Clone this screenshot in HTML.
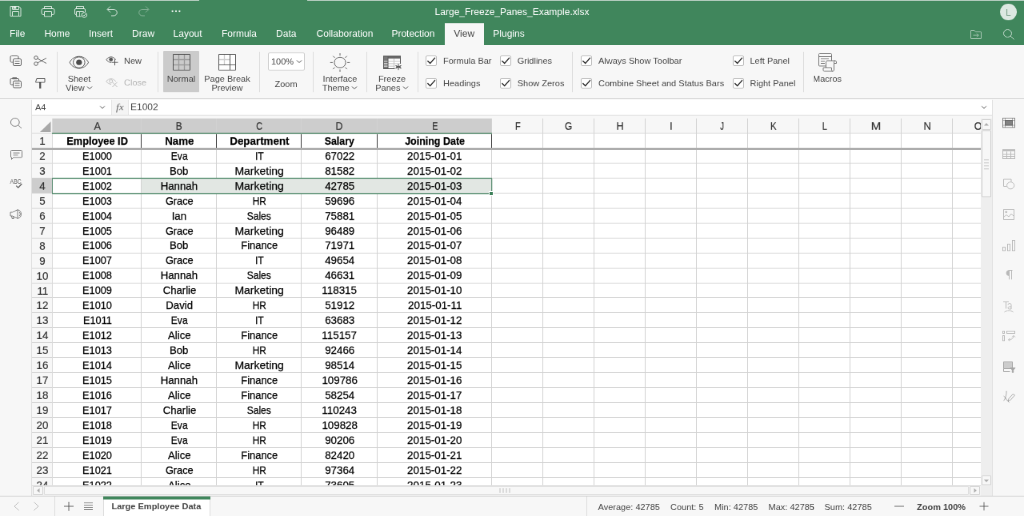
<!DOCTYPE html>
<html><head><meta charset="utf-8"><title>Large_Freeze_Panes_Example.xlsx</title>
<style>
html,body{margin:0;padding:0;}
body{width:1024px;height:516px;overflow:hidden;background:#f7f7f7;font-family:"Liberation Sans",sans-serif;}
#stage{position:absolute;left:0;top:0;width:1280px;height:688px;transform-origin:0 0;transform:scale(.8,.75);will-change:transform;background:#f7f7f7;overflow:hidden;font-size:11px;color:#3d3d3d;}
#stage div,#stage span,#stage svg{position:absolute;box-sizing:border-box;}
.t{white-space:nowrap;line-height:14px;}
.c{text-align:center;}
#hdr{left:0;top:0;width:1280px;height:60px;background:#40865c;}
.tab{top:28px;height:32px;line-height:33px;font-size:12px;color:#fff;white-space:nowrap;}
.sep{width:1px;background:#dcdcdc;top:69px;height:54px;}
.cb{width:14px;height:14px;background:#fff;border:1px solid #b9b9b9;border-radius:2px;}
.lbl{font-size:11px;line-height:14px;white-space:nowrap;color:#444;}
#grid{left:40px;top:158px;width:1186px;height:489px;background:#fff;overflow:hidden;}
.hl{left:0;height:1px;background:#d0d0d0;}
.vl{top:0;width:1px;background:#d2d2d2;}
.cell{height:20px;line-height:20px;font-size:14.2px;text-align:center;white-space:nowrap;color:#000;overflow:hidden;-webkit-text-stroke:0.25px #000;}
.ch{top:0;height:20px;line-height:20.2px;font-size:14.2px;text-align:center;color:#333;-webkit-text-stroke:0.2px #333;}
.rh{left:0;width:26px;height:20px;line-height:21px;font-size:14.2px;text-align:center;color:#333;-webkit-text-stroke:0.2px #333;}
.sbt{top:667.5px;font-size:11px;line-height:16px;white-space:nowrap;color:#444;}
</style></head><body>
<div id="stage">

<div id="hdr">
<div style="left:0;top:0;width:249px;height:1.3333px;background:#c7d8cf"></div>
<div style="left:384px;top:0;width:896px;height:1.3333px;background:#c7d8cf"></div>
<svg style="left:10px;top:5px;width:20px;height:20px;" viewBox="0 0 20 20"><g stroke="#fff" fill="none" stroke-width="1" opacity=".82"><path d="M3 3.500h10.500l2.500 2.500v10.500h-13z"/><path d="M5.500 3.500v4h8v-4"/><path d="M5.500 16.500v-6h8v6"/><path d="M6.500 4h3.800v2.700h-3.800z" fill="#fff" stroke="none"/></g></svg>
<svg style="left:50px;top:5px;width:20px;height:20px;" viewBox="0 0 20 20"><g stroke="#fff" fill="none" stroke-width="1" opacity=".82"><path d="M5.500 6.500v-3h9v3"/><path d="M5.500 14.500h-1.500a2 2 0 0 1-2-2v-4a2 2 0 0 1 2-2h12a2 2 0 0 1 2 2v4a2 2 0 0 1-2 2h-1.500"/><path d="M5.500 10.500h9v6.500h-9z"/></g></svg>
<svg style="left:90px;top:5px;width:20px;height:20px;" viewBox="0 0 20 20"><g stroke="#fff" fill="none" stroke-width="1" opacity=".82"><path d="M5.500 6.500v-3h9v3"/><path d="M5.500 14.500h-0.500a1.500 1.500 0 0 1-1.500-1.500v-5a1.500 1.500 0 0 1 1.500-1.500h10a1.500 1.500 0 0 1 1.500 1.500v3"/><path d="M11.500 17h-6v-6.500h9v1"/><path d="M9.500 10.500v6.500" opacity=".8"/><circle cx="15.300" cy="15" r="3.300"/><path d="M13.800 15.100l1.100 1.100 2-2.200"/></g></svg>
<svg style="left:130px;top:5px;width:20px;height:20px;" viewBox="0 0 20 20"><g stroke="#fff" fill="none" stroke-width="1" opacity=".82"><path d="M8 3.500l-4 4 4 4"/><path d="M4.500 7.500h7.500a4.200 4.200 0 0 1 0 8.500h-3"/></g></svg>
<svg style="left:170px;top:5px;width:20px;height:20px;" viewBox="0 0 20 20"><g stroke="#fff" fill="none" stroke-width="1" opacity=".38"><path d="M12 3.500l4 4-4 4"/><path d="M15.500 7.500h-7.500a4.200 4.200 0 0 0 0 8.500h3"/></g></svg>
<svg style="left:210px;top:5px;width:20px;height:20px;" viewBox="0 0 20 20"><g fill="#fff" opacity=".9"><circle cx="5.600" cy="10" r="1.150"/><circle cx="10" cy="10" r="1.150"/><circle cx="14.400" cy="10" r="1.150"/></g></svg>
<svg style="left:1210px;top:35.5px;width:20px;height:20px;" viewBox="0 0 20 20"><g stroke="#fff" fill="none" stroke-width="1" opacity=".55"><path d="M4 15.500a0.500 0.500 0 0 1-0.500-0.500v-10a0.500 0.500 0 0 1 0.500-0.500h4l1.500 2h6.500a0.500 0.500 0 0 1 0.500 0.500v8a0.500 0.500 0 0 1-0.500 0.500z"/><path d="M6.500 11h6.500"/><path d="M11 8.700l2.300 2.300-2.300 2.300" /></g></svg>
<svg style="left:1250.5px;top:36px;width:20px;height:20px;" viewBox="0 0 20 20"><g stroke="#fff" fill="none" stroke-width="1" opacity=".7"><circle cx="8.500" cy="8.500" r="5"/><path d="M12.200 12.200l4.300 4.300"/></g></svg>
<div class="t c" style="left:440px;width:400px;top:8px;font-size:12px;line-height:16px;color:#fff;">Large_Freeze_Panes_Example.xlsx</div>
<div style="left:1250px;top:5px;width:20.5px;height:22px;border-radius:50%;background:#dce8e1;"></div>
<div class="t c" style="left:1250px;top:8.5px;width:20.5px;font-size:12px;line-height:16px;color:#7fa38d;">L</div>
<div style="left:555.5px;top:31px;width:49.500px;height:29px;background:#f7f7f7;"></div>
<div class="tab" style="left:12.1px;top:28.8px;color:#fff;">File</div>
<div class="tab" style="left:55.4px;top:28.8px;color:#fff;">Home</div>
<div class="tab" style="left:111px;top:28.8px;color:#fff;">Insert</div>
<div class="tab" style="left:165.1px;top:28.8px;color:#fff;">Draw</div>
<div class="tab" style="left:216.6px;top:28.8px;color:#fff;">Layout</div>
<div class="tab" style="left:276.9px;top:28.8px;color:#fff;">Formula</div>
<div class="tab" style="left:345.1px;top:28.8px;color:#fff;">Data</div>
<div class="tab" style="left:395.6px;top:28.8px;color:#fff;">Collaboration</div>
<div class="tab" style="left:489.4px;top:28.8px;color:#fff;">Protection</div>
<div class="tab" style="left:567.3px;top:28.8px;color:#444;">View</div>
<div class="tab" style="left:616.3px;top:28.8px;color:#fff;">Plugins</div>
</div>
<div id="tb" style="left:0;top:60px;width:1280px;height:72px;background:#f7f7f7;border-bottom:1px solid #d6d6d6;"></div>
<svg style="left:10px;top:71px;width:20px;height:20px;" viewBox="0 0 20 20"><g stroke="#444" fill="none" stroke-width="1" opacity=".85"><rect x="3" y="3.500" width="10" height="8.500" rx="1.500"/><rect x="6.500" y="7.500" width="10" height="9" rx="1.500" fill="#f7f7f7"/><path d="M8.500 10.500h6M8.500 13.500h6"/></g></svg>
<svg style="left:40px;top:71px;width:20px;height:20px;" viewBox="0 0 20 20"><g stroke="#444" fill="none" stroke-width="1" opacity=".85"><circle cx="5" cy="6" r="2.300"/><circle cx="5" cy="14" r="2.300"/><path d="M7 7.200l11 6.300M7 12.800l11-6.300"/></g></svg>
<svg style="left:10px;top:100px;width:20px;height:20px;" viewBox="0 0 20 20"><g stroke="#444" fill="none" stroke-width="1" opacity=".85"><path d="M6.500 13h-2a1.500 1.500 0 0 1-1.500-1.500v-5.500a1.500 1.500 0 0 1 1.500-1.500h7.500a1.500 1.500 0 0 1 1.500 1.500v1.500"/><path d="M5.500 4.300h5.500" stroke-width="2.200"/><rect x="6.500" y="8" width="10" height="9" rx="1.500" fill="#f7f7f7"/><path d="M8.500 11h6M8.500 14h6"/></g></svg>
<svg style="left:40px;top:100px;width:20px;height:20px;" viewBox="0 0 20 20"><g stroke="#444" fill="none" stroke-width="1" opacity=".9"><path d="M6 4.500h10v5h-11.500z"/><path d="M10.200 10v8" stroke-width="2.300"/></g></svg>
<div class="sep" style="left:70.5px;"></div>
<svg style="left:84px;top:68px;width:30px;height:30px;" viewBox="0 0 30 30"><g stroke="#444" fill="none" stroke-width="1" opacity=".9"><path d="M3 15.200c5.300-10.600 18.300-10.600 23.600 0c-5.300 10.600-18.300 10.600-23.600 0z"/><circle cx="14.800" cy="15.200" r="7.300"/><circle cx="14.800" cy="15.200" r="3.600" fill="#3a3a3a" stroke="none"/></g></svg>
<div class="lbl c" style="left:39px;top:98px;width:120px;">Sheet</div>
<div class="lbl c" style="left:39px;top:110px;width:120px;">View<svg style="position:relative;display:inline-block;width:8px;height:6px;margin-left:2.300px;top:-1px" viewBox="0 0 8 6"><path d="M1 1.500l3 3 3-3" stroke="#444" fill="none"/></svg></div>
<svg style="left:130px;top:71px;width:20px;height:20px;" viewBox="0 0 20 20"><g stroke="#444" fill="none" stroke-width="1" opacity=".9"><path d="M3 8.600c3-5 8.500-5 11.500 0"/><path d="M3 8.600c1.500 2.500 3.800 3.700 6 3.700"/><circle cx="8.700" cy="8.300" r="2" fill="#444"/><path d="M13.500 8.200v8M9.500 12.200h8"/></g></svg>
<div class="lbl" style="left:155px;top:74px;">New</div>
<svg style="left:130px;top:100px;width:20px;height:20px;" viewBox="0 0 20 20"><g stroke="#444" fill="none" stroke-width="1" opacity=".33"><path d="M3 8.600c3-5 8.500-5 11.500 0"/><path d="M3 8.600c1.500 2.500 3.800 3.700 6 3.700"/><circle cx="8.700" cy="8.300" r="2"/><path d="M10.500 9.500l6 6.500M16.500 9.500l-6 6.500"/></g></svg>
<div class="lbl" style="left:155px;top:103px;opacity:.38">Close</div>
<div class="sep" style="left:196.5px;"></div>
<div style="left:203.500px;top:68px;width:45.300px;height:55px;background:#cbcbcb;border-radius:1px;"></div>
<svg style="left:212px;top:68.4px;width:30px;height:30px;" viewBox="0 0 30 30"><g stroke="#444" fill="none" stroke-width="1" opacity=".9"><path d="M4.500 4.500h21v21h-21z"/><path d="M11.500 4.500v21M18.500 4.500v21M4.500 11.500h21M4.500 18.500h21" opacity=".42" stroke-width="1.300"/></g></svg>
<div class="lbl c" style="left:166.5px;top:98px;width:120px;">Normal</div>
<svg style="left:269.3px;top:68.4px;width:30px;height:30px;" viewBox="0 0 30 30"><g stroke="#444" fill="none" stroke-width="1" opacity=".9"><path d="M4.500 4.500h21v21h-21z" fill="#fff"/><path d="M18.500 4.500v21M4.500 18.500h21"/><path d="M11.500 4.500v14M4.500 11.500h14" opacity=".3" stroke-width="1.300"/></g></svg>
<div class="lbl c" style="left:224px;top:98px;width:120px;">Page Break</div>
<div class="lbl c" style="left:224px;top:110px;width:120px;">Preview</div>
<div class="sep" style="left:323.5px;"></div>
<div style="left:334.500px;top:70px;width:46px;height:24px;background:#fff;border:1px solid #cbcbcb;border-radius:2px;"></div>
<div class="lbl" style="left:339px;top:75px;">100%</div>
<svg style="left:369.5px;top:79px;width:8px;height:6px;" viewBox="0 0 8 6"><path d="M1 1.500l3 3 3-3" stroke="#444" fill="none"/></svg>
<div class="lbl c" style="left:297.5px;top:105px;width:120px;">Zoom</div>
<div class="sep" style="left:390.5px;"></div>
<svg style="left:410px;top:68px;width:30px;height:30px;" viewBox="0 0 30 30"><g stroke="#444" fill="none" stroke-width="1" opacity=".85"><circle cx="15" cy="15.400" r="7.100"/><path d="M15 3v3.200M15 24.600v3.200M2.700 15.400h3.200M24.100 15.400h3.200M6.300 6.700l2.300 2.300M21.400 21.800l2.300 2.300M6.300 24.100l2.300-2.300M21.400 9l2.300-2.300"/></g></svg>
<div class="lbl c" style="left:365px;top:98px;width:120px;">Interface</div>
<div class="lbl c" style="left:365px;top:110px;width:120px;">Theme<svg style="position:relative;display:inline-block;width:8px;height:6px;margin-left:2.300px;top:-1px" viewBox="0 0 8 6"><path d="M1 1.500l3 3 3-3" stroke="#444" fill="none"/></svg></div>
<div class="sep" style="left:458px;"></div>
<svg style="left:475px;top:68px;width:30px;height:30px;" viewBox="0 0 30 30"><g stroke="#444" fill="none" stroke-width="1" opacity=".88"><rect x="4.500" y="7" width="21" height="16.500" fill="#fff"/><rect x="4.500" y="7" width="21" height="3.200" fill="#555" stroke="none"/><rect x="4.500" y="7" width="5.500" height="16.500" fill="#666" stroke="none"/><path d="M4.500 13.500h21M4.500 16.900h21M4.500 20.200h21" stroke="#bbb"/><path d="M4.500 13.500h5.500M4.500 16.900h5.500M4.500 20.200h5.500" stroke="#ddd"/><path d="M17.500 10v13.500" stroke="#bbb"/><path d="M10 7v16.500"/><rect x="4.500" y="7" width="21" height="16.500"/><rect x="18.500" y="17" width="9" height="9" fill="#f7f7f7" stroke="none"/><path d="M23 17.200v8M19.500 19.200l7 4M26.500 19.200l-7 4M20 21.200h6" stroke-width="1.100"/></g></svg>
<div class="lbl c" style="left:430px;top:98px;width:120px;">Freeze</div>
<div class="lbl c" style="left:430px;top:110px;width:120px;">Panes<svg style="position:relative;display:inline-block;width:8px;height:6px;margin-left:2.300px;top:-1px" viewBox="0 0 8 6"><path d="M1 1.500l3 3 3-3" stroke="#444" fill="none"/></svg></div>
<div class="sep" style="left:521.5px;"></div>
<div class="cb" style="left:532px;top:74px;"><svg style="left:0;top:0;width:12px;height:12px" viewBox="0 0 12 12"><path d="M1.400 6l3.300 3.500 6.200-7.600" stroke="#222" stroke-width="1.400" fill="none"/></svg></div>
<div class="lbl" style="left:554px;top:74px;">Formula Bar</div>
<div class="cb" style="left:532px;top:103.5px;"><svg style="left:0;top:0;width:12px;height:12px" viewBox="0 0 12 12"><path d="M1.400 6l3.300 3.500 6.200-7.600" stroke="#222" stroke-width="1.400" fill="none"/></svg></div>
<div class="lbl" style="left:554px;top:103.5px;">Headings</div>
<div class="cb" style="left:624.7px;top:74px;"><svg style="left:0;top:0;width:12px;height:12px" viewBox="0 0 12 12"><path d="M1.400 6l3.300 3.500 6.200-7.600" stroke="#222" stroke-width="1.400" fill="none"/></svg></div>
<div class="lbl" style="left:646.7px;top:74px;">Gridlines</div>
<div class="cb" style="left:624.7px;top:103.5px;"><svg style="left:0;top:0;width:12px;height:12px" viewBox="0 0 12 12"><path d="M1.400 6l3.300 3.500 6.200-7.600" stroke="#222" stroke-width="1.400" fill="none"/></svg></div>
<div class="lbl" style="left:646.7px;top:103.5px;">Show Zeros</div>
<div class="sep" style="left:715px;"></div>
<div class="cb" style="left:726px;top:74px;"><svg style="left:0;top:0;width:12px;height:12px" viewBox="0 0 12 12"><path d="M1.400 6l3.300 3.500 6.200-7.600" stroke="#222" stroke-width="1.400" fill="none"/></svg></div>
<div class="lbl" style="left:748px;top:74px;">Always Show Toolbar</div>
<div class="cb" style="left:726px;top:103.5px;"><svg style="left:0;top:0;width:12px;height:12px" viewBox="0 0 12 12"><path d="M1.400 6l3.300 3.500 6.200-7.600" stroke="#222" stroke-width="1.400" fill="none"/></svg></div>
<div class="lbl" style="left:748px;top:103.5px;">Combine Sheet and Status Bars</div>
<div class="cb" style="left:915.5px;top:74px;"><svg style="left:0;top:0;width:12px;height:12px" viewBox="0 0 12 12"><path d="M1.400 6l3.300 3.500 6.200-7.600" stroke="#222" stroke-width="1.400" fill="none"/></svg></div>
<div class="lbl" style="left:937.5px;top:74px;">Left Panel</div>
<div class="cb" style="left:915.5px;top:103.5px;"><svg style="left:0;top:0;width:12px;height:12px" viewBox="0 0 12 12"><path d="M1.400 6l3.300 3.500 6.200-7.600" stroke="#222" stroke-width="1.400" fill="none"/></svg></div>
<div class="lbl" style="left:937.5px;top:103.5px;">Right Panel</div>
<div class="sep" style="left:1004px;"></div>
<svg style="left:1019px;top:68px;width:30px;height:30px;" viewBox="0 0 30 30"><g stroke="#444" fill="none" stroke-width="1" opacity=".72"><rect x="4.500" y="3.500" width="16" height="16.500" rx="1"/><path d="M4.500 7.500h16"/><path d="M7 10.500h10M7 13.500h5M7 16.500h5"/><path d="M13.500 22.500v-8a1.500 1.500 0 0 1 1.500-1.500h10a1.500 1.500 0 0 1 1.500 1.500v2h-3v9a1.500 1.500 0 0 1-1.500 1.500h-10.500a1.500 1.500 0 0 1-1.500-1.500v-3z" fill="#f7f7f7"/><path d="M13.500 22.500h7v3a1.500 1.500 0 0 0 1.500 1.500"/><path d="M23.500 16.500v-2a1.500 1.500 0 0 1 1.500-1.500" /></g></svg>
<div class="lbl c" style="left:974px;top:98px;width:120px;">Macros</div>
<div style="left:0;top:132px;width:1280px;height:26px;background:#f7f7f7;"></div>
<div style="left:40px;top:133px;width:1200px;height:21px;background:#fff;border-bottom:1px solid #d9d9d9;"></div>
<div class="lbl" style="left:44px;top:136px;">A4</div>
<svg style="left:124px;top:140px;width:8px;height:6px;" viewBox="0 0 8 6"><path d="M1 1.500l3 3 3-3" stroke="#555" fill="none"/></svg>
<div style="left:139px;top:133px;width:22px;height:20px;background:#f4f4f4;"></div>
<div style="left:139px;top:133px;width:1px;height:20px;background:#e3e3e3;"></div>
<div style="left:160px;top:133px;width:1px;height:20px;background:#e3e3e3;"></div>
<div class="t" style="left:145px;top:133.500px;font-family:'Liberation Serif',serif;font-style:italic;font-size:13.5px;line-height:18px;color:#666;">fx</div>
<div class="lbl" style="left:163px;top:135.500px;font-size:12px;">E1002</div>
<svg style="left:1226px;top:140px;width:8px;height:6px;" viewBox="0 0 8 6"><path d="M1 1.500l3 3 3-3" stroke="#555" fill="none"/></svg>
<div style="left:0;top:133px;width:40px;height:529px;background:#f7f7f7;border-right:1px solid #dedede;"></div>
<svg style="left:10px;top:155px;width:20px;height:20px;" viewBox="0 0 20 20"><g stroke="#444" fill="none" stroke-width="1" opacity=".7"><circle cx="8.800" cy="8" r="5.400"/><path d="M12.700 11.900l4.300 4.300"/></g></svg>
<svg style="left:10px;top:195.5px;width:20px;height:20px;" viewBox="0 0 20 20"><g stroke="#444" fill="none" stroke-width="1" opacity=".7"><path d="M4.500 4.500h12a1 1 0 0 1 1 1v7.500a1 1 0 0 1-1 1h-9.500l-2.500 2.500v-2.500h0a1 1 0 0 1-1-1v-7.500a1 1 0 0 1 1-1z"/><path d="M6.500 8h8M6.500 10.800h6"/></g></svg>
<svg style="left:10px;top:234px;width:20px;height:20px;" viewBox="0 0 20 20"><text x="2.600" y="11.200" font-family="Liberation Sans, sans-serif" font-size="9.400" textLength="14" lengthAdjust="spacingAndGlyphs" fill="#555">ABC</text></svg>
<svg style="left:10px;top:234px;width:20px;height:20px;" viewBox="0 0 20 20"><g stroke="#444" fill="none" stroke-width="1" opacity=".85"><path d="M10.300 13.600l2.400 2.700 4.600-5.300" stroke-width="1.300"/></g></svg>
<svg style="left:10px;top:275px;width:20px;height:20px;" viewBox="0 0 20 20"><g stroke="#444" fill="none" stroke-width="1" opacity=".7"><path d="M3 8h2.500l6.500-3.300v11.600l-6.500-3.300h-2.500z"/><path d="M4.500 13l0.700 3.500h2l-0.700-3.500"/><path d="M12 4.700a6 6 0 0 1 0 11.600M14 8a3 3 0 0 1 0 5"/></g></svg>
<div style="left:1240px;top:133px;width:40px;height:529px;background:#f7f7f7;border-left:1px solid #e0e0e0;"></div>
<svg style="left:1250.5px;top:154px;width:20px;height:20px;" viewBox="0 0 20 20"><g stroke="#444" fill="none" stroke-width="1" opacity="0.8"><rect x="2.500" y="3.500" width="15" height="12.500" opacity=".8"/><rect x="5.500" y="6.500" width="9" height="6.500" fill="#666"/><path d="M2.500 6.500h15M2.500 13h15M5.500 3.500v12.500M14.500 3.500v12.500" opacity=".5"/></g></svg>
<svg style="left:1250.5px;top:195px;width:20px;height:20px;" viewBox="0 0 20 20"><g stroke="#444" fill="none" stroke-width="1" opacity="0.34"><rect x="2.500" y="4.500" width="15" height="12"/><path d="M2.500 5.500h15" stroke-width="2"/><path d="M2.500 10.500h15M2.500 13.500h15M7.500 7v9.500M12.500 7v9.500"/></g></svg>
<svg style="left:1250.5px;top:235.5px;width:20px;height:20px;" viewBox="0 0 20 20"><g stroke="#444" fill="none" stroke-width="1" opacity="0.34"><path d="M7.500 12.500h-4v-9.500h9.500v3.500"/><circle cx="12.200" cy="11.300" r="4.600"/></g></svg>
<svg style="left:1250.5px;top:276px;width:20px;height:20px;" viewBox="0 0 20 20"><g stroke="#444" fill="none" stroke-width="1" opacity="0.34"><rect x="3.500" y="3.500" width="13" height="13"/><path d="M3.500 13.500l3.500-3 3 2.500 3-4 3.500 3.500"/><circle cx="6.700" cy="6.700" r="1" fill="#444"/></g></svg>
<svg style="left:1250.5px;top:317.5px;width:20px;height:20px;" viewBox="0 0 20 20"><g stroke="#444" fill="none" stroke-width="1" opacity="0.34"><rect x="2.500" y="11.500" width="3" height="5"/><rect x="8.500" y="7.500" width="3" height="9"/><rect x="14.500" y="2.500" width="3" height="14"/></g></svg>
<svg style="left:1250.5px;top:356px;width:20px;height:20px;" viewBox="0 0 20 20"><g stroke="#444" fill="none" stroke-width="1" opacity="0.34"><path d="M10.500 16.500v-12h4M13.500 4.500v12"/><path d="M10.500 4.500a3.500 3.500 0 0 0 0 7z" fill="#444"/></g></svg>
<svg style="left:1250.5px;top:398px;width:20px;height:20px;" viewBox="0 0 20 20"><g stroke="#444" fill="none" stroke-width="1" opacity="0.34"><path d="M3 4.500h7M6.500 4.500v9M13 14v-5.500a2 2 0 0 0-4 0M13 11h-2.500a1.500 1.500 0 0 0 0 3h2.500"/><path d="M4.500 18c3-2.200 8-2.200 11 0"/></g></svg>
<svg style="left:1250.5px;top:438px;width:20px;height:20px;" viewBox="0 0 20 20"><g stroke="#444" fill="none" stroke-width="1" opacity="0.34"><rect x="2.500" y="3.500" width="2" height="3"/><rect x="2.500" y="9.500" width="2" height="7"/><rect x="7.500" y="3.500" width="10" height="3"/><path d="M9.500 15c4 0 6.500-2 6.500-5.500M11.500 13l-2 2 2 2M14 11.500l2-2 2 2"/></g></svg>
<svg style="left:1250.5px;top:478.5px;width:20px;height:20px;" viewBox="0 0 20 20"><g stroke="#444" fill="none" stroke-width="1" opacity="0.45"><path d="M3.500 3.500h11v9h-11z" fill="#999"/><path d="M3.500 12.500v4h8"/><path d="M12 11.500h6l-2.300 2.800v3.200h-1.400v-3.200z" fill="#444"/></g></svg>
<svg style="left:1250.5px;top:518.5px;width:20px;height:20px;" viewBox="0 0 20 20"><g stroke="#444" fill="none" stroke-width="1" opacity="0.42"><path d="M3.500 15.500c2-2 4-9 3.500-13.500M3.500 9c2.500 1 4 7 7 8.500M9 16l1-3.500 5.500-6.500 2 2-5.500 6.500z"/></g></svg>
<div id="grid">
<div style="left:0;top:0;width:1186px;height:20px;background:#f7f7f7;"></div>
<div style="left:0;top:0;width:26px;height:489px;background:#f7f7f7;"></div>
<div style="left:26px;top:0;width:549px;height:20px;background:#cdcdcd;"></div>
<div style="left:0;top:79.85px;width:26px;height:20px;background:#cdcdcd;"></div>
<div class="hl" style="top:19px;width:1186px;"></div>
<div class="hl" style="top:38.95px;width:1186px;"></div>
<div class="hl" style="top:58.9px;width:1186px;"></div>
<div class="hl" style="top:78.85px;width:1186px;"></div>
<div class="hl" style="top:98.8px;width:1186px;"></div>
<div class="hl" style="top:118.75px;width:1186px;"></div>
<div class="hl" style="top:138.7px;width:1186px;"></div>
<div class="hl" style="top:158.65px;width:1186px;"></div>
<div class="hl" style="top:178.6px;width:1186px;"></div>
<div class="hl" style="top:198.55px;width:1186px;"></div>
<div class="hl" style="top:218.5px;width:1186px;"></div>
<div class="hl" style="top:238.45px;width:1186px;"></div>
<div class="hl" style="top:258.4px;width:1186px;"></div>
<div class="hl" style="top:278.35px;width:1186px;"></div>
<div class="hl" style="top:298.3px;width:1186px;"></div>
<div class="hl" style="top:318.25px;width:1186px;"></div>
<div class="hl" style="top:338.2px;width:1186px;"></div>
<div class="hl" style="top:358.15px;width:1186px;"></div>
<div class="hl" style="top:378.1px;width:1186px;"></div>
<div class="hl" style="top:398.05px;width:1186px;"></div>
<div class="hl" style="top:418px;width:1186px;"></div>
<div class="hl" style="top:437.95px;width:1186px;"></div>
<div class="hl" style="top:457.9px;width:1186px;"></div>
<div class="hl" style="top:477.85px;width:1186px;"></div>
<div class="hl" style="top:497.8px;width:1186px;"></div>
<div class="hl" style="top:517.75px;width:1186px;"></div>
<div class="vl" style="left:25px;height:489px;background:#dadada"></div>
<div class="vl" style="left:136px;height:489px;"></div>
<div class="vl" style="left:230px;height:489px;"></div>
<div class="vl" style="left:336px;height:489px;"></div>
<div class="vl" style="left:431px;height:489px;"></div>
<div class="vl" style="left:574px;height:489px;"></div>
<div class="vl" style="left:638px;height:489px;"></div>
<div class="vl" style="left:702px;height:489px;"></div>
<div class="vl" style="left:766px;height:489px;"></div>
<div class="vl" style="left:830px;height:489px;"></div>
<div class="vl" style="left:894px;height:489px;"></div>
<div class="vl" style="left:958px;height:489px;"></div>
<div class="vl" style="left:1022px;height:489px;"></div>
<div class="vl" style="left:1086px;height:489px;"></div>
<div class="vl" style="left:1150px;height:489px;"></div>
<div class="vl" style="left:1214px;height:489px;"></div>
<div class="vl" style="left:1278px;height:489px;"></div>
<div class="hl" style="top:19px;width:1186px;background:#d5d5d5"></div>
<div class="ch" style="left:26px;width:111px;"><span style="position:relative;display:inline-block;transform:scaleX(0.896);">A</span></div>
<div class="ch" style="left:137px;width:94px;"><span style="position:relative;display:inline-block;transform:scaleX(0.842);">B</span></div>
<div class="ch" style="left:231px;width:106px;"><span style="position:relative;display:inline-block;transform:scaleX(0.763);">C</span></div>
<div class="ch" style="left:337px;width:95px;"><span style="position:relative;display:inline-block;transform:scaleX(0.880);">D</span></div>
<div class="ch" style="left:432px;width:143px;"><span style="position:relative;display:inline-block;transform:scaleX(0.756);">E</span></div>
<div class="ch" style="left:575px;width:64px;"><span style="position:relative;display:inline-block;transform:scaleX(0.777);">F</span></div>
<div class="ch" style="left:639px;width:64px;"><span style="position:relative;display:inline-block;transform:scaleX(0.838);">G</span></div>
<div class="ch" style="left:703px;width:64px;"><span style="position:relative;display:inline-block;transform:scaleX(0.891);">H</span></div>
<div class="ch" style="left:767px;width:64px;"><span style="position:relative;display:inline-block;transform:scaleX(0.937);">I</span></div>
<div class="ch" style="left:831px;width:64px;"><span style="position:relative;display:inline-block;transform:scaleX(0.659);">J</span></div>
<div class="ch" style="left:895px;width:64px;"><span style="position:relative;display:inline-block;transform:scaleX(0.805);">K</span></div>
<div class="ch" style="left:959px;width:64px;"><span style="position:relative;display:inline-block;transform:scaleX(0.781);">L</span></div>
<div class="ch" style="left:1023px;width:64px;"><span style="position:relative;display:inline-block;transform:scaleX(1.060);">M</span></div>
<div class="ch" style="left:1087px;width:64px;"><span style="position:relative;display:inline-block;transform:scaleX(0.923);">N</span></div>
<div class="ch" style="left:1151px;width:64px;"><span style="position:relative;display:inline-block;transform:scaleX(0.879);">O</span></div>
<div class="ch" style="left:1215px;width:64px;"><span style="position:relative;display:inline-block;transform:scaleX(0.800);">P</span></div>
<div class="rh" style="top:20px;"><span style="position:relative;display:inline-block;transform:scaleX(0.941);">1</span></div>
<div class="rh" style="top:39.95px;"><span style="position:relative;display:inline-block;transform:scaleX(0.941);">2</span></div>
<div class="rh" style="top:59.9px;"><span style="position:relative;display:inline-block;transform:scaleX(0.941);">3</span></div>
<div class="rh" style="top:79.85px;"><span style="position:relative;display:inline-block;transform:scaleX(0.941);">4</span></div>
<div class="rh" style="top:99.8px;"><span style="position:relative;display:inline-block;transform:scaleX(0.941);">5</span></div>
<div class="rh" style="top:119.75px;"><span style="position:relative;display:inline-block;transform:scaleX(0.941);">6</span></div>
<div class="rh" style="top:139.7px;"><span style="position:relative;display:inline-block;transform:scaleX(0.941);">7</span></div>
<div class="rh" style="top:159.65px;"><span style="position:relative;display:inline-block;transform:scaleX(0.941);">8</span></div>
<div class="rh" style="top:179.6px;"><span style="position:relative;display:inline-block;transform:scaleX(0.941);">9</span></div>
<div class="rh" style="top:199.55px;"><span style="position:relative;display:inline-block;transform:scaleX(0.941);">10</span></div>
<div class="rh" style="top:219.5px;"><span style="position:relative;display:inline-block;transform:scaleX(0.941);">11</span></div>
<div class="rh" style="top:239.45px;"><span style="position:relative;display:inline-block;transform:scaleX(0.941);">12</span></div>
<div class="rh" style="top:259.4px;"><span style="position:relative;display:inline-block;transform:scaleX(0.941);">13</span></div>
<div class="rh" style="top:279.35px;"><span style="position:relative;display:inline-block;transform:scaleX(0.941);">14</span></div>
<div class="rh" style="top:299.3px;"><span style="position:relative;display:inline-block;transform:scaleX(0.941);">15</span></div>
<div class="rh" style="top:319.25px;"><span style="position:relative;display:inline-block;transform:scaleX(0.941);">16</span></div>
<div class="rh" style="top:339.2px;"><span style="position:relative;display:inline-block;transform:scaleX(0.941);">17</span></div>
<div class="rh" style="top:359.15px;"><span style="position:relative;display:inline-block;transform:scaleX(0.941);">18</span></div>
<div class="rh" style="top:379.1px;"><span style="position:relative;display:inline-block;transform:scaleX(0.941);">19</span></div>
<div class="rh" style="top:399.05px;"><span style="position:relative;display:inline-block;transform:scaleX(0.941);">20</span></div>
<div class="rh" style="top:419px;"><span style="position:relative;display:inline-block;transform:scaleX(0.941);">21</span></div>
<div class="rh" style="top:438.95px;"><span style="position:relative;display:inline-block;transform:scaleX(0.941);">22</span></div>
<div class="rh" style="top:458.9px;"><span style="position:relative;display:inline-block;transform:scaleX(0.941);">23</span></div>
<div class="rh" style="top:478.85px;"><span style="position:relative;display:inline-block;transform:scaleX(0.941);">24</span></div>
<div style="left:137px;top:79.85px;width:437px;height:19px;background:#e2e7e3;"></div>
<div class="cell" style="left:26px;top:19.8px;width:111px;font-weight:bold;color:#000;"><span style="position:relative;display:inline-block;transform:scaleX(0.899);">Employee ID</span></div>
<div class="cell" style="left:137px;top:19.8px;width:94px;font-weight:bold;color:#000;"><span style="position:relative;display:inline-block;transform:scaleX(0.936);">Name</span></div>
<div class="cell" style="left:231px;top:19.8px;width:106px;font-weight:bold;color:#000;"><span style="position:relative;display:inline-block;transform:scaleX(0.942);">Department</span></div>
<div class="cell" style="left:337px;top:19.8px;width:95px;font-weight:bold;color:#000;"><span style="position:relative;display:inline-block;transform:scaleX(0.872);">Salary</span></div>
<div class="cell" style="left:432px;top:19.8px;width:143px;font-weight:bold;color:#000;"><span style="position:relative;display:inline-block;transform:scaleX(0.879);">Joining Date</span></div>
<div class="cell" style="left:26px;top:39.75px;width:111px;"><span style="position:relative;display:inline-block;transform:scaleX(0.899);">E1000</span></div>
<div class="cell" style="left:137px;top:39.75px;width:94px;"><span style="position:relative;display:inline-block;transform:scaleX(0.851);">Eva</span></div>
<div class="cell" style="left:231px;top:39.75px;width:106px;"><span style="position:relative;display:inline-block;transform:scaleX(0.859);">IT</span></div>
<div class="cell" style="left:337px;top:39.75px;width:95px;"><span style="position:relative;display:inline-block;transform:scaleX(0.941);">67022</span></div>
<div class="cell" style="left:432px;top:39.75px;width:143px;"><span style="position:relative;display:inline-block;transform:scaleX(0.942);">2015-01-01</span></div>
<div class="cell" style="left:26px;top:59.7px;width:111px;"><span style="position:relative;display:inline-block;transform:scaleX(0.899);">E1001</span></div>
<div class="cell" style="left:137px;top:59.7px;width:94px;"><span style="position:relative;display:inline-block;transform:scaleX(0.927);">Bob</span></div>
<div class="cell" style="left:231px;top:59.7px;width:106px;"><span style="position:relative;display:inline-block;transform:scaleX(0.987);">Marketing</span></div>
<div class="cell" style="left:337px;top:59.7px;width:95px;"><span style="position:relative;display:inline-block;transform:scaleX(0.941);">81582</span></div>
<div class="cell" style="left:432px;top:59.7px;width:143px;"><span style="position:relative;display:inline-block;transform:scaleX(0.942);">2015-01-02</span></div>
<div class="cell" style="left:26px;top:79.65px;width:111px;"><span style="position:relative;display:inline-block;transform:scaleX(0.899);">E1002</span></div>
<div class="cell" style="left:137px;top:79.65px;width:94px;"><span style="position:relative;display:inline-block;transform:scaleX(0.931);">Hannah</span></div>
<div class="cell" style="left:231px;top:79.65px;width:106px;"><span style="position:relative;display:inline-block;transform:scaleX(0.987);">Marketing</span></div>
<div class="cell" style="left:337px;top:79.65px;width:95px;"><span style="position:relative;display:inline-block;transform:scaleX(0.941);">42785</span></div>
<div class="cell" style="left:432px;top:79.65px;width:143px;"><span style="position:relative;display:inline-block;transform:scaleX(0.942);">2015-01-03</span></div>
<div class="cell" style="left:26px;top:99.6px;width:111px;"><span style="position:relative;display:inline-block;transform:scaleX(0.899);">E1003</span></div>
<div class="cell" style="left:137px;top:99.6px;width:94px;"><span style="position:relative;display:inline-block;transform:scaleX(0.902);">Grace</span></div>
<div class="cell" style="left:231px;top:99.6px;width:106px;"><span style="position:relative;display:inline-block;transform:scaleX(0.834);">HR</span></div>
<div class="cell" style="left:337px;top:99.6px;width:95px;"><span style="position:relative;display:inline-block;transform:scaleX(0.941);">59696</span></div>
<div class="cell" style="left:432px;top:99.6px;width:143px;"><span style="position:relative;display:inline-block;transform:scaleX(0.942);">2015-01-04</span></div>
<div class="cell" style="left:26px;top:119.55px;width:111px;"><span style="position:relative;display:inline-block;transform:scaleX(0.899);">E1004</span></div>
<div class="cell" style="left:137px;top:119.55px;width:94px;"><span style="position:relative;display:inline-block;transform:scaleX(0.933);">Ian</span></div>
<div class="cell" style="left:231px;top:119.55px;width:106px;"><span style="position:relative;display:inline-block;transform:scaleX(0.849);">Sales</span></div>
<div class="cell" style="left:337px;top:119.55px;width:95px;"><span style="position:relative;display:inline-block;transform:scaleX(0.941);">75881</span></div>
<div class="cell" style="left:432px;top:119.55px;width:143px;"><span style="position:relative;display:inline-block;transform:scaleX(0.942);">2015-01-05</span></div>
<div class="cell" style="left:26px;top:139.5px;width:111px;"><span style="position:relative;display:inline-block;transform:scaleX(0.899);">E1005</span></div>
<div class="cell" style="left:137px;top:139.5px;width:94px;"><span style="position:relative;display:inline-block;transform:scaleX(0.902);">Grace</span></div>
<div class="cell" style="left:231px;top:139.5px;width:106px;"><span style="position:relative;display:inline-block;transform:scaleX(0.987);">Marketing</span></div>
<div class="cell" style="left:337px;top:139.5px;width:95px;"><span style="position:relative;display:inline-block;transform:scaleX(0.941);">96489</span></div>
<div class="cell" style="left:432px;top:139.5px;width:143px;"><span style="position:relative;display:inline-block;transform:scaleX(0.942);">2015-01-06</span></div>
<div class="cell" style="left:26px;top:159.45px;width:111px;"><span style="position:relative;display:inline-block;transform:scaleX(0.899);">E1006</span></div>
<div class="cell" style="left:137px;top:159.45px;width:94px;"><span style="position:relative;display:inline-block;transform:scaleX(0.927);">Bob</span></div>
<div class="cell" style="left:231px;top:159.45px;width:106px;"><span style="position:relative;display:inline-block;transform:scaleX(0.911);">Finance</span></div>
<div class="cell" style="left:337px;top:159.45px;width:95px;"><span style="position:relative;display:inline-block;transform:scaleX(0.941);">71971</span></div>
<div class="cell" style="left:432px;top:159.45px;width:143px;"><span style="position:relative;display:inline-block;transform:scaleX(0.942);">2015-01-07</span></div>
<div class="cell" style="left:26px;top:179.4px;width:111px;"><span style="position:relative;display:inline-block;transform:scaleX(0.899);">E1007</span></div>
<div class="cell" style="left:137px;top:179.4px;width:94px;"><span style="position:relative;display:inline-block;transform:scaleX(0.902);">Grace</span></div>
<div class="cell" style="left:231px;top:179.4px;width:106px;"><span style="position:relative;display:inline-block;transform:scaleX(0.859);">IT</span></div>
<div class="cell" style="left:337px;top:179.4px;width:95px;"><span style="position:relative;display:inline-block;transform:scaleX(0.941);">49654</span></div>
<div class="cell" style="left:432px;top:179.4px;width:143px;"><span style="position:relative;display:inline-block;transform:scaleX(0.942);">2015-01-08</span></div>
<div class="cell" style="left:26px;top:199.35px;width:111px;"><span style="position:relative;display:inline-block;transform:scaleX(0.899);">E1008</span></div>
<div class="cell" style="left:137px;top:199.35px;width:94px;"><span style="position:relative;display:inline-block;transform:scaleX(0.931);">Hannah</span></div>
<div class="cell" style="left:231px;top:199.35px;width:106px;"><span style="position:relative;display:inline-block;transform:scaleX(0.849);">Sales</span></div>
<div class="cell" style="left:337px;top:199.35px;width:95px;"><span style="position:relative;display:inline-block;transform:scaleX(0.941);">46631</span></div>
<div class="cell" style="left:432px;top:199.35px;width:143px;"><span style="position:relative;display:inline-block;transform:scaleX(0.942);">2015-01-09</span></div>
<div class="cell" style="left:26px;top:219.3px;width:111px;"><span style="position:relative;display:inline-block;transform:scaleX(0.899);">E1009</span></div>
<div class="cell" style="left:137px;top:219.3px;width:94px;"><span style="position:relative;display:inline-block;transform:scaleX(0.927);">Charlie</span></div>
<div class="cell" style="left:231px;top:219.3px;width:106px;"><span style="position:relative;display:inline-block;transform:scaleX(0.987);">Marketing</span></div>
<div class="cell" style="left:337px;top:219.3px;width:95px;"><span style="position:relative;display:inline-block;transform:scaleX(0.941);">118315</span></div>
<div class="cell" style="left:432px;top:219.3px;width:143px;"><span style="position:relative;display:inline-block;transform:scaleX(0.942);">2015-01-10</span></div>
<div class="cell" style="left:26px;top:239.25px;width:111px;"><span style="position:relative;display:inline-block;transform:scaleX(0.899);">E1010</span></div>
<div class="cell" style="left:137px;top:239.25px;width:94px;"><span style="position:relative;display:inline-block;transform:scaleX(0.930);">David</span></div>
<div class="cell" style="left:231px;top:239.25px;width:106px;"><span style="position:relative;display:inline-block;transform:scaleX(0.834);">HR</span></div>
<div class="cell" style="left:337px;top:239.25px;width:95px;"><span style="position:relative;display:inline-block;transform:scaleX(0.941);">51912</span></div>
<div class="cell" style="left:432px;top:239.25px;width:143px;"><span style="position:relative;display:inline-block;transform:scaleX(0.942);">2015-01-11</span></div>
<div class="cell" style="left:26px;top:259.2px;width:111px;"><span style="position:relative;display:inline-block;transform:scaleX(0.899);">E1011</span></div>
<div class="cell" style="left:137px;top:259.2px;width:94px;"><span style="position:relative;display:inline-block;transform:scaleX(0.851);">Eva</span></div>
<div class="cell" style="left:231px;top:259.2px;width:106px;"><span style="position:relative;display:inline-block;transform:scaleX(0.859);">IT</span></div>
<div class="cell" style="left:337px;top:259.2px;width:95px;"><span style="position:relative;display:inline-block;transform:scaleX(0.941);">63683</span></div>
<div class="cell" style="left:432px;top:259.2px;width:143px;"><span style="position:relative;display:inline-block;transform:scaleX(0.942);">2015-01-12</span></div>
<div class="cell" style="left:26px;top:279.15px;width:111px;"><span style="position:relative;display:inline-block;transform:scaleX(0.899);">E1012</span></div>
<div class="cell" style="left:137px;top:279.15px;width:94px;"><span style="position:relative;display:inline-block;transform:scaleX(0.933);">Alice</span></div>
<div class="cell" style="left:231px;top:279.15px;width:106px;"><span style="position:relative;display:inline-block;transform:scaleX(0.911);">Finance</span></div>
<div class="cell" style="left:337px;top:279.15px;width:95px;"><span style="position:relative;display:inline-block;transform:scaleX(0.941);">115157</span></div>
<div class="cell" style="left:432px;top:279.15px;width:143px;"><span style="position:relative;display:inline-block;transform:scaleX(0.942);">2015-01-13</span></div>
<div class="cell" style="left:26px;top:299.1px;width:111px;"><span style="position:relative;display:inline-block;transform:scaleX(0.899);">E1013</span></div>
<div class="cell" style="left:137px;top:299.1px;width:94px;"><span style="position:relative;display:inline-block;transform:scaleX(0.927);">Bob</span></div>
<div class="cell" style="left:231px;top:299.1px;width:106px;"><span style="position:relative;display:inline-block;transform:scaleX(0.834);">HR</span></div>
<div class="cell" style="left:337px;top:299.1px;width:95px;"><span style="position:relative;display:inline-block;transform:scaleX(0.941);">92466</span></div>
<div class="cell" style="left:432px;top:299.1px;width:143px;"><span style="position:relative;display:inline-block;transform:scaleX(0.942);">2015-01-14</span></div>
<div class="cell" style="left:26px;top:319.05px;width:111px;"><span style="position:relative;display:inline-block;transform:scaleX(0.899);">E1014</span></div>
<div class="cell" style="left:137px;top:319.05px;width:94px;"><span style="position:relative;display:inline-block;transform:scaleX(0.933);">Alice</span></div>
<div class="cell" style="left:231px;top:319.05px;width:106px;"><span style="position:relative;display:inline-block;transform:scaleX(0.987);">Marketing</span></div>
<div class="cell" style="left:337px;top:319.05px;width:95px;"><span style="position:relative;display:inline-block;transform:scaleX(0.941);">98514</span></div>
<div class="cell" style="left:432px;top:319.05px;width:143px;"><span style="position:relative;display:inline-block;transform:scaleX(0.942);">2015-01-15</span></div>
<div class="cell" style="left:26px;top:339px;width:111px;"><span style="position:relative;display:inline-block;transform:scaleX(0.899);">E1015</span></div>
<div class="cell" style="left:137px;top:339px;width:94px;"><span style="position:relative;display:inline-block;transform:scaleX(0.931);">Hannah</span></div>
<div class="cell" style="left:231px;top:339px;width:106px;"><span style="position:relative;display:inline-block;transform:scaleX(0.911);">Finance</span></div>
<div class="cell" style="left:337px;top:339px;width:95px;"><span style="position:relative;display:inline-block;transform:scaleX(0.941);">109786</span></div>
<div class="cell" style="left:432px;top:339px;width:143px;"><span style="position:relative;display:inline-block;transform:scaleX(0.942);">2015-01-16</span></div>
<div class="cell" style="left:26px;top:358.95px;width:111px;"><span style="position:relative;display:inline-block;transform:scaleX(0.899);">E1016</span></div>
<div class="cell" style="left:137px;top:358.95px;width:94px;"><span style="position:relative;display:inline-block;transform:scaleX(0.933);">Alice</span></div>
<div class="cell" style="left:231px;top:358.95px;width:106px;"><span style="position:relative;display:inline-block;transform:scaleX(0.911);">Finance</span></div>
<div class="cell" style="left:337px;top:358.95px;width:95px;"><span style="position:relative;display:inline-block;transform:scaleX(0.941);">58254</span></div>
<div class="cell" style="left:432px;top:358.95px;width:143px;"><span style="position:relative;display:inline-block;transform:scaleX(0.942);">2015-01-17</span></div>
<div class="cell" style="left:26px;top:378.9px;width:111px;"><span style="position:relative;display:inline-block;transform:scaleX(0.899);">E1017</span></div>
<div class="cell" style="left:137px;top:378.9px;width:94px;"><span style="position:relative;display:inline-block;transform:scaleX(0.927);">Charlie</span></div>
<div class="cell" style="left:231px;top:378.9px;width:106px;"><span style="position:relative;display:inline-block;transform:scaleX(0.849);">Sales</span></div>
<div class="cell" style="left:337px;top:378.9px;width:95px;"><span style="position:relative;display:inline-block;transform:scaleX(0.941);">110243</span></div>
<div class="cell" style="left:432px;top:378.9px;width:143px;"><span style="position:relative;display:inline-block;transform:scaleX(0.942);">2015-01-18</span></div>
<div class="cell" style="left:26px;top:398.85px;width:111px;"><span style="position:relative;display:inline-block;transform:scaleX(0.899);">E1018</span></div>
<div class="cell" style="left:137px;top:398.85px;width:94px;"><span style="position:relative;display:inline-block;transform:scaleX(0.851);">Eva</span></div>
<div class="cell" style="left:231px;top:398.85px;width:106px;"><span style="position:relative;display:inline-block;transform:scaleX(0.834);">HR</span></div>
<div class="cell" style="left:337px;top:398.85px;width:95px;"><span style="position:relative;display:inline-block;transform:scaleX(0.941);">109828</span></div>
<div class="cell" style="left:432px;top:398.85px;width:143px;"><span style="position:relative;display:inline-block;transform:scaleX(0.942);">2015-01-19</span></div>
<div class="cell" style="left:26px;top:418.8px;width:111px;"><span style="position:relative;display:inline-block;transform:scaleX(0.899);">E1019</span></div>
<div class="cell" style="left:137px;top:418.8px;width:94px;"><span style="position:relative;display:inline-block;transform:scaleX(0.851);">Eva</span></div>
<div class="cell" style="left:231px;top:418.8px;width:106px;"><span style="position:relative;display:inline-block;transform:scaleX(0.834);">HR</span></div>
<div class="cell" style="left:337px;top:418.8px;width:95px;"><span style="position:relative;display:inline-block;transform:scaleX(0.941);">90206</span></div>
<div class="cell" style="left:432px;top:418.8px;width:143px;"><span style="position:relative;display:inline-block;transform:scaleX(0.942);">2015-01-20</span></div>
<div class="cell" style="left:26px;top:438.75px;width:111px;"><span style="position:relative;display:inline-block;transform:scaleX(0.899);">E1020</span></div>
<div class="cell" style="left:137px;top:438.75px;width:94px;"><span style="position:relative;display:inline-block;transform:scaleX(0.933);">Alice</span></div>
<div class="cell" style="left:231px;top:438.75px;width:106px;"><span style="position:relative;display:inline-block;transform:scaleX(0.911);">Finance</span></div>
<div class="cell" style="left:337px;top:438.75px;width:95px;"><span style="position:relative;display:inline-block;transform:scaleX(0.941);">82420</span></div>
<div class="cell" style="left:432px;top:438.75px;width:143px;"><span style="position:relative;display:inline-block;transform:scaleX(0.942);">2015-01-21</span></div>
<div class="cell" style="left:26px;top:458.7px;width:111px;"><span style="position:relative;display:inline-block;transform:scaleX(0.899);">E1021</span></div>
<div class="cell" style="left:137px;top:458.7px;width:94px;"><span style="position:relative;display:inline-block;transform:scaleX(0.902);">Grace</span></div>
<div class="cell" style="left:231px;top:458.7px;width:106px;"><span style="position:relative;display:inline-block;transform:scaleX(0.834);">HR</span></div>
<div class="cell" style="left:337px;top:458.7px;width:95px;"><span style="position:relative;display:inline-block;transform:scaleX(0.941);">97364</span></div>
<div class="cell" style="left:432px;top:458.7px;width:143px;"><span style="position:relative;display:inline-block;transform:scaleX(0.942);">2015-01-22</span></div>
<div class="cell" style="left:26px;top:478.65px;width:111px;"><span style="position:relative;display:inline-block;transform:scaleX(0.899);">E1022</span></div>
<div class="cell" style="left:137px;top:478.65px;width:94px;"><span style="position:relative;display:inline-block;transform:scaleX(0.933);">Alice</span></div>
<div class="cell" style="left:231px;top:478.65px;width:106px;"><span style="position:relative;display:inline-block;transform:scaleX(0.859);">IT</span></div>
<div class="cell" style="left:337px;top:478.65px;width:95px;"><span style="position:relative;display:inline-block;transform:scaleX(0.941);">73605</span></div>
<div class="cell" style="left:432px;top:478.65px;width:143px;"><span style="position:relative;display:inline-block;transform:scaleX(0.942);">2015-01-23</span></div>
<div style="left:136px;top:20px;width:1px;height:20px;background:#3a3a3a;"></div>
<div style="left:230px;top:20px;width:1px;height:20px;background:#3a3a3a;"></div>
<div style="left:336px;top:20px;width:1px;height:20px;background:#3a3a3a;"></div>
<div style="left:431px;top:20px;width:1px;height:20px;background:#3a3a3a;"></div>
<div style="left:574px;top:20px;width:1px;height:20px;background:#3a3a3a;"></div>
<div style="left:25px;top:19px;width:550px;height:1px;background:#1d6b3f;"></div>
<div style="left:25px;top:20px;width:550px;height:1px;background:#c3ccc7;"></div>
<div style="left:25px;top:79.85px;width:1px;height:20px;background:#4b8a63;"></div>
<div style="left:0;top:39.4px;width:1186px;height:2.6px;background:#adadad;"></div>
<div style="left:25px;top:79px;width:550px;height:1px;background:#217346;"></div>
<div style="left:26px;top:80px;width:548px;height:1px;background:#bfc9c4;"></div>
<div style="left:26px;top:99px;width:548px;height:1px;background:#bfc9c4;"></div>
<div style="left:25px;top:100px;width:550px;height:1px;background:#217346;"></div>
<div style="left:25px;top:79px;width:1px;height:22px;background:#5e8f75;"></div>
<div style="left:574px;top:79px;width:1px;height:22px;background:#5e8f75;"></div>
<div style="left:575px;top:80px;width:1px;height:18px;background:#cfdfd5;"></div>
<div style="left:571px;top:97px;width:6px;height:6px;background:#3d8059;border:1px solid #fff;"></div>
<svg style="left:0;top:0;width:26px;height:20px" viewBox="0 0 26 20"><path d="M23.5 4V18H10z" fill="#a8a8a8"/></svg>
</div>
<div style="left:1226px;top:158px;width:14px;height:489px;background:#eeeeee;"></div>
<div style="left:1227px;top:159px;width:12px;height:14px;background:#f7f7f7;border:1px solid #d0d0d0;border-radius:1px;"></div>
<svg style="left:1229px;top:162px;width:8px;height:8px;" viewBox="0 0 8 8"><path d="M1 5.500l3-3.500 3 3.500z" fill="#adadad"/></svg>
<div style="left:1227px;top:174px;width:12px;height:89px;background:#f7f7f7;border:1px solid #cbcbcb;border-radius:1px;"></div>
<div style="left:1230px;top:212px;width:6px;height:1.500px;background:#dadada;"></div>
<div style="left:1230px;top:216px;width:6px;height:1.500px;background:#dadada;"></div>
<div style="left:1230px;top:220px;width:6px;height:1.500px;background:#dadada;"></div>
<div style="left:1230px;top:224px;width:6px;height:1.500px;background:#dadada;"></div>
<div style="left:1227px;top:634px;width:12px;height:13px;background:#f7f7f7;border:1px solid #d0d0d0;border-radius:1px;"></div>
<svg style="left:1229px;top:637px;width:8px;height:8px;" viewBox="0 0 8 8"><path d="M1 2.500l3 3.500 3-3.500z" fill="#adadad"/></svg>
<div style="left:40px;top:647px;width:1200px;height:14px;background:#f4f4f4;border-top:1px solid #dfdfdf;"></div>
<div style="left:1226px;top:647px;width:14px;height:14px;background:#eeeeee;"></div>
<div style="left:41px;top:648px;width:13px;height:12px;background:#f7f7f7;border:1px solid #d0d0d0;border-radius:1px;"></div>
<svg style="left:43.5px;top:650px;width:8px;height:8px;" viewBox="0 0 8 8"><path d="M5.500 1l-3.500 3 3.500 3z" fill="#adadad"/></svg>
<div style="left:1212px;top:648px;width:13px;height:12px;background:#f7f7f7;border:1px solid #d0d0d0;border-radius:1px;"></div>
<svg style="left:1214.5px;top:650px;width:8px;height:8px;" viewBox="0 0 8 8"><path d="M2.500 1l3.500 3-3.500 3z" fill="#adadad"/></svg>
<div style="left:55px;top:648px;width:1156px;height:12px;background:#f7f7f7;border:1px solid #dcdcdc;border-radius:1px;"></div>
<div style="left:624px;top:651px;width:1.500px;height:6px;background:#dadada;"></div>
<div style="left:628px;top:651px;width:1.500px;height:6px;background:#dadada;"></div>
<div style="left:632px;top:651px;width:1.500px;height:6px;background:#dadada;"></div>
<div style="left:636px;top:651px;width:1.500px;height:6px;background:#dadada;"></div>
<div style="left:0;top:661px;width:1280px;height:27px;background:#f7f7f7;border-top:1px solid #cbcbcb;"></div>
<svg style="left:11px;top:665px;width:20px;height:20px;" viewBox="0 0 20 20"><g stroke="#444" fill="none" stroke-width="1" opacity=".35"><path d="M12.500 4.500l-5.500 5.500 5.500 5.500"/></g></svg>
<svg style="left:35px;top:665px;width:20px;height:20px;" viewBox="0 0 20 20"><g stroke="#444" fill="none" stroke-width="1" opacity=".35"><path d="M7.500 4.500l5.500 5.500-5.500 5.500"/></g></svg>
<div style="left:68px;top:662px;width:1px;height:26px;background:#dcdcdc;"></div>
<svg style="left:76px;top:665px;width:20px;height:20px;" viewBox="0 0 20 20"><g stroke="#444" fill="none" stroke-width="1" opacity=".85"><path d="M10 4v12M4 10h12"/></g></svg>
<svg style="left:100px;top:665px;width:20px;height:20px;" viewBox="0 0 20 20"><g stroke="#444" fill="none" stroke-width="1" opacity=".7"><path d="M5 5.500h11M5 8.500h11M5 11.500h11M5 14.500h11"/></g></svg>
<div style="left:129px;top:662px;width:134px;height:26px;background:#fff;border-left:1px solid #dcdcdc;border-right:1px solid #dcdcdc;"></div>
<div style="left:129px;top:661.500px;width:134px;height:4px;background:#40865c;"></div>
<div class="sbt" style="left:139.500px;top:666.500px;font-weight:bold;">Large Employee Data</div>
<div style="left:733px;top:662px;width:1px;height:26px;background:#dcdcdc;"></div>
<div class="sbt" style="left:747.5px;">Average: 42785</div>
<div class="sbt" style="left:838px;">Count: 5</div>
<div class="sbt" style="left:893px;">Min: 42785</div>
<div class="sbt" style="left:960.5px;">Max: 42785</div>
<div class="sbt" style="left:1030.5px;">Sum: 42785</div>
<svg style="left:1114px;top:665px;width:20px;height:20px;" viewBox="0 0 20 20"><g stroke="#444" fill="none" stroke-width="1" opacity=".8"><path d="M4 10h12"/></g></svg>
<div class="sbt" style="left:1146px;font-weight:bold;">Zoom 100%</div>
<svg style="left:1220px;top:665px;width:20px;height:20px;" viewBox="0 0 20 20"><g stroke="#444" fill="none" stroke-width="1" opacity=".8"><path d="M10 4.500v11M4.500 10h11"/></g></svg>
</div></body></html>
